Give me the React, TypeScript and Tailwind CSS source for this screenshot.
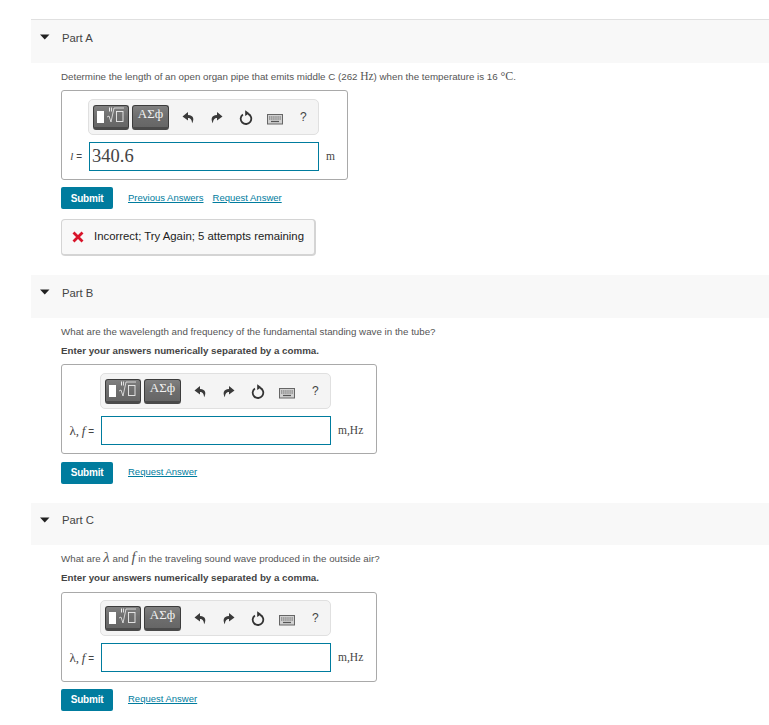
import React from "react";

const SANS = "font-['Liberation_Sans',Arial,sans-serif]";
const SERIF = "font-['Liberation_Serif','Times_New_Roman',serif]";

function Undo({ flip = false }: { flip?: boolean }) {
  return (
    <svg width="13" height="13" viewBox="0 0 13 13" className={flip ? "-scale-x-100" : ""}>
      <path d="M6 1 L0.5 5.6 L6 9.4 V7 C8.4 7 9.8 8.4 10.1 12.3 C12.2 8.6 12.2 4.2 6 3.9 Z" fill="#3a3a3a" />
    </svg>
  );
}

function Redo() {
  return <Undo flip />;
}

function Reset() {
  return (
    <svg width="14" height="15" viewBox="0 0 14 15">
      <path d="M9.2 3.9 A5.3 5.3 0 1 1 3.9 4.4" fill="none" stroke="#333" strokeWidth="1.8" />
      <path d="M6.2 0.2 L10.4 3.2 L6.2 6 Z" fill="#333" />
    </svg>
  );
}

function Keyboard() {
  return (
    <svg width="16" height="11" viewBox="0 0 16 11">
      <rect x="0.5" y="0.5" width="15" height="9.5" fill="#d0d0d0" stroke="#666" />
      <path d="M2 3h12M2 5h12" stroke="#666" strokeWidth="1" strokeDasharray="1.4 0.7" />
      <path d="M4 7.5h8" stroke="#555" strokeWidth="1.2" />
    </svg>
  );
}

function ToolBtn({ w, children }: { w: string; children: React.ReactNode }) {
  return (
    <div className={`${w} h-[25px] rounded-[3px] border border-[#3c3c3c] bg-gradient-to-b from-[#808080] via-[#6e6e6e] to-[#666666] border-b-[3px] border-b-[#4a4a4a] flex items-start justify-center overflow-hidden`}>
      {children}
    </div>
  );
}

function Toolbar() {
  return (
    <div className="w-[231px] h-[36px] rounded-[5px] border border-[#e0e0e0] bg-[#f4f4f4] flex items-center pl-[4px]">
      <div className="flex gap-[3px]">
        <ToolBtn w="w-[36px]">
          <div className="flex items-start gap-[2px] pt-[1px] text-white">
            <div className="w-[7px] h-[12px] bg-white mt-[4px]" />
            <svg width="19" height="17" viewBox="0 0 19 17">
              <path d="M1 10 L3 9 L5 15 L8 1 H18" fill="none" stroke="#eee" strokeWidth="0.8" />
              <rect x="10.5" y="4.5" width="6.5" height="10" fill="none" stroke="#eee" strokeWidth="0.9" />
              <rect x="3" y="0.5" width="1" height="4" fill="#eee" />
              <rect x="5" y="0.5" width="1" height="4" fill="#ddd" />
            </svg>
          </div>
        </ToolBtn>
        <ToolBtn w="w-[37px]">
          <span className={`${SERIF} text-[13px] leading-[15px] text-[#f2f2f2]`}>ΑΣф</span>
        </ToolBtn>
      </div>
      <div className="flex items-center ml-[13px]"><Undo /></div>
      <div className="flex items-center ml-[15px]"><Redo /></div>
      <div className="flex items-center ml-[16px]"><Reset /></div>
      <div className="flex items-center ml-[14px] mt-[4px]"><Keyboard /></div>
      <span className={`${SANS} text-[12px] text-[#444] ml-[17px] mb-[1px]`}>?</span>
    </div>
  );
}

function AnswerBox({
  w, toolbarMl, toolbarMt = "mt-[8px]", label, labelW, value, unit,
}: { w: string; toolbarMl: string; toolbarMt?: string; label: React.ReactNode; labelW: string; value?: string; unit: string }) {
  return (
    <div className={`${w} h-[90px] rounded-[3px] border border-[#a9a9a9] bg-white`}>
      <div className={`${toolbarMl} ${toolbarMt}`}>
        <Toolbar />
      </div>
      <div className="flex items-center mt-[7px]">
        <div className={`${labelW} shrink-0 flex justify-end pr-[7px] text-[#444] ${SERIF} text-[11px]`}>{label}</div>
        <div className={`w-[230px] h-[29px] border border-[#007c9e] bg-white flex items-center pl-[2px] ${SERIF} text-[18.5px] text-[#444]`}>
          {value}
        </div>
        <span className={`${SERIF} ml-[7px] text-[11.5px] text-[#444]`}>{unit}</span>
      </div>
    </div>
  );
}

function PartHeader({ title, h, titleMt = "mt-[11px]" }: { title: string; h: string; titleMt?: string }) {
  return (
    <div className={`${h} bg-[#f8f8f8] flex items-start`}>
      <svg width="10" height="6" viewBox="0 0 10 6" className="ml-[9px] mt-[14px] shrink-0">
        <path d="M0 0.5 H9.5 L4.75 5.5 Z" fill="#222" />
      </svg>
      <span className={`${SANS} text-[11.3px] leading-[14px] text-[#444] ml-[12px] ${titleMt}`}>{title}</span>
    </div>
  );
}

function SubmitRow({ links, raised = true }: { links: string[]; raised?: boolean }) {
  return (
    <div className="flex items-center">
      <div className={`w-[52px] h-[22px] ${raised ? "pb-[1px]" : ""} rounded-[2px] bg-[#007c9e] text-white ${SANS} text-[10px] tracking-[-0.2px] font-bold flex items-center justify-center`}>
        Submit
      </div>
      <div className={`flex gap-[9px] ml-[15px] ${raised ? "mb-[1px]" : ""}`}>
        {links.map((l) => (
          <a key={l} className={`${SANS} text-[9.5px] text-[#007c9e] underline`}>{l}</a>
        ))}
      </div>
    </div>
  );
}

const Lam = () => <span className={`${SERIF} text-[15px] leading-[10px] italic`}>λ</span>;
const F = () => <span className={`${SERIF} text-[15px] leading-[10px] italic`}>f</span>;

const LamF = (
  <span className="whitespace-nowrap">
    <span className="text-[13px]">λ,</span> <i className="text-[13px]">f</i> <span className={`${SANS} text-[10px]`}>=</span>
  </span>
);

export default function App() {
  return (
    <div className={`w-[769px] h-[725px] bg-white overflow-hidden pt-[19px] pl-[31px] ${SANS}`}>
      {/* Part A */}
      <div className="border-t border-[#e0e0e0]">
        <PartHeader title="Part A" h="h-[43px]" />
      </div>
      <div className="pl-[30px]">
        <p className="text-[9.75px] h-[14px] leading-[14px] text-[#555] mt-[7px]">
          Determine the length of an open organ pipe that emits middle C (262 <span className={`${SERIF} text-[11.5px] leading-[10px]`}>Hz</span>) when the temperature is 16 <span className={`${SERIF} text-[12px] leading-[10px]`}>°C</span>.
        </p>
        <div className="mt-[6px]">
          <AnswerBox
            w="w-[287px]"
            toolbarMl="ml-[26px]"
            labelW="w-[27px]"
            label={<span className="whitespace-nowrap"><i>l</i> <span className={`${SANS} text-[10px]`}>=</span></span>}
            value="340.6"
            unit="m"
          />
        </div>
        <div className="mt-[7px]">
          <SubmitRow links={["Previous Answers", "Request Answer"]} raised={false} />
        </div>
        <div className="mt-[10px] w-[255px] h-[37px] rounded-[4px] border border-[#d4d4d4] border-b-2 border-r-2 bg-[#f8f8f8] flex items-center pl-[10px]">
          <svg width="12" height="12" viewBox="0 0 12 12">
            <path d="M1.5 1.5 L10.5 10.5 M10.5 1.5 L1.5 10.5" stroke="#d8142a" strokeWidth="2.8" />
          </svg>
          <span className="ml-[10px] text-[11.35px] text-[#222]">Incorrect; Try Again; 5 attempts remaining</span>
        </div>
      </div>

      {/* Part B */}
      <div className="mt-[19px]">
        <PartHeader title="Part B" h="h-[43px]" />
      </div>
      <div className="pl-[30px]">
        <p className="text-[9.75px] leading-[14px] text-[#555] mt-[7px]">
          What are the wavelength and frequency of the fundamental standing wave in the tube?
        </p>
        <p className="text-[9.75px] leading-[14px] font-bold text-[#444] mt-[5px]">
          Enter your answers numerically separated by a comma.
        </p>
        <div className="mt-[6px]">
          <AnswerBox w="w-[316px]" toolbarMl="ml-[38px]" labelW="w-[39px]" label={LamF} unit="m,Hz" />
        </div>
        <div className="mt-[8px]">
          <SubmitRow links={["Request Answer"]} />
        </div>
      </div>

      {/* Part C */}
      <div className="mt-[19px]">
        <PartHeader title="Part C" h="h-[42px]" titleMt="mt-[10px]" />
      </div>
      <div className="pl-[30px]">
        <p className="text-[9.75px] h-[14px] leading-[14px] text-[#555] mt-[7px]">
          What are <Lam /> and <F /> in the traveling sound wave produced in the outside air?
        </p>
        <p className="text-[9.75px] leading-[14px] font-bold text-[#444] mt-[5px]">
          Enter your answers numerically separated by a comma.
        </p>
        <div className="mt-[7px]">
          <AnswerBox w="w-[316px]" toolbarMl="ml-[38px]" toolbarMt="mt-[7px]" labelW="w-[39px]" label={LamF} unit="m,Hz" />
        </div>
        <div className="mt-[7px]">
          <SubmitRow links={["Request Answer"]} />
        </div>
      </div>
    </div>
  );
}
